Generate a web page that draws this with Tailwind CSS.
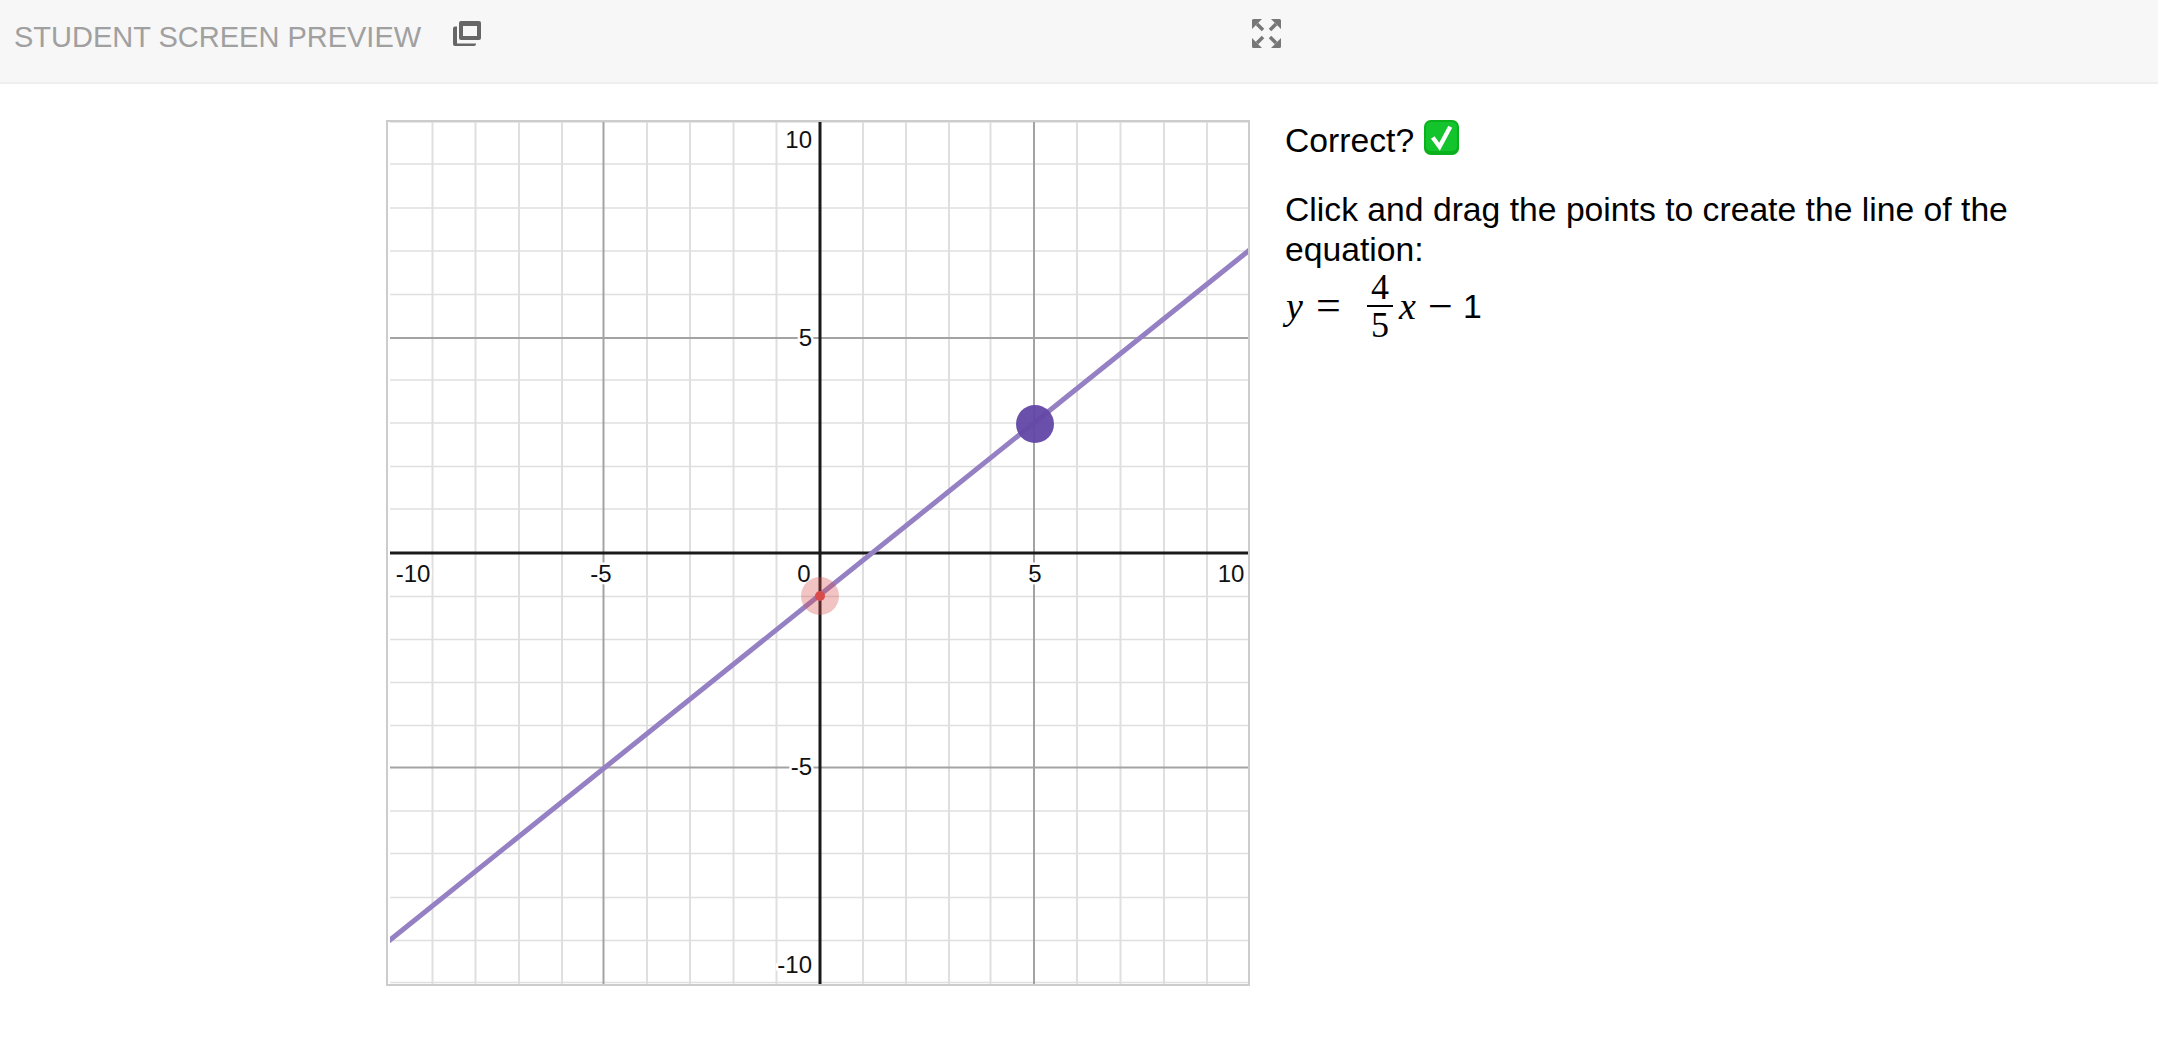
<!DOCTYPE html>
<html lang="en">
<head>
  <meta charset="UTF-8" />
  <title>Student Screen Preview</title>
  <script src="https://cdn.jsdelivr.net/npm/@tailwindcss/browser@4"></script>
</head>
<body class="bg-white font-['Liberation_Sans',Arial,sans-serif] h-[1050px] overflow-hidden">

  <header class="h-[84px] bg-[#f7f7f7] border-b-2 border-[#eeeeee] flex items-start">
    <span class="ml-[14px] mt-[19px] text-[29px] leading-[36px] text-[#a0a0a0]">STUDENT SCREEN PREVIEW</span>
    <svg class="ml-[31px] mt-[20px] w-[30px] h-[27px]" viewBox="0 0 30 27" fill="#666666">
      <path fill-rule="evenodd" d="M9 1h18a2 2 0 0 1 2 2v15a2 2 0 0 1-2 2H9a2 2 0 0 1-2-2V3a2 2 0 0 1 2-2zm2 5v10h14V6z"/>
      <path d="M1 8.500a2 2 0 0 1 2-2h2v17h19v0.500a2 2 0 0 1-2 2H3a2 2 0 0 1-2-2z"/>
    </svg>
    <svg class="ml-[770px] mt-[19px] w-[29px] h-[29px]" viewBox="0 0 29 29" fill="#777777" stroke="#777777">
      <g>
        <path stroke="none" d="M1.500 0H10L0 10V1.500A1.500 1.500 0 0 1 1.500 0z"/>
        <line x1="5" y1="5" x2="11" y2="11" stroke-width="3.500"/>
      </g>
      <g transform="rotate(90 14.500 14.500)">
        <path stroke="none" d="M1.500 0H10L0 10V1.500A1.500 1.500 0 0 1 1.500 0z"/>
        <line x1="5" y1="5" x2="11" y2="11" stroke-width="3.500"/>
      </g>
      <g transform="rotate(180 14.500 14.500)">
        <path stroke="none" d="M1.500 0H10L0 10V1.500A1.500 1.500 0 0 1 1.500 0z"/>
        <line x1="5" y1="5" x2="11" y2="11" stroke-width="3.500"/>
      </g>
      <g transform="rotate(270 14.500 14.500)">
        <path stroke="none" d="M1.500 0H10L0 10V1.500A1.500 1.500 0 0 1 1.500 0z"/>
        <line x1="5" y1="5" x2="11" y2="11" stroke-width="3.500"/>
      </g>
    </svg>
  </header>

  <main class="flex items-start pt-[36px] pl-[386px]">
    <div class="w-[864px] h-[866px] border-2 border-[#cccccc] shrink-0">
      <svg id="graph" class="block w-[860px] h-[862px]" viewBox="388 122 860 862">
        <defs>
          <clipPath id="plotArea"><rect x="390" y="122" width="859" height="862" /></clipPath>
        </defs>
        <g id="gridLines"></g>
        <g font-family="'Liberation Sans', Arial, sans-serif" font-size="24" fill="#111111" stroke="#ffffff" stroke-width="5" paint-order="stroke">
          <text x="812" y="148" text-anchor="end">10</text>
          <text x="812" y="346" text-anchor="end">5</text>
          <text x="812" y="775" text-anchor="end">-5</text>
          <text x="812" y="973" text-anchor="end">-10</text>
          <text x="413" y="582" text-anchor="middle">-10</text>
          <text x="601" y="582" text-anchor="middle">-5</text>
          <text x="804" y="582" text-anchor="middle">0</text>
          <text x="1035" y="582" text-anchor="middle">5</text>
          <text x="1231" y="582" text-anchor="middle">10</text>
        </g>
        <line clip-path="url(#plotArea)" x1="380" y1="948" x2="1259" y2="242.400" stroke="#9580c4" stroke-width="5" />
        <circle cx="820" cy="596" r="19" fill="#d94a4a" fill-opacity="0.33" />
        <circle cx="820" cy="596" r="5" fill="#d94a4a" />
        <circle cx="1035" cy="424" r="19" fill="#6347a6" fill-opacity="0.95" />
      </svg>
    </div>

    <div class="ml-[35px] w-[760px] text-[33.7px] leading-[40px] text-black">
      <p class="flex items-start gap-[10px] h-[40px]">
        Correct?
        <svg class="w-[35px] h-[35px]" viewBox="0 0 36 36">
          <rect width="36" height="36" rx="7" fill="#0bb01d" />
          <rect x="2" y="2" width="32" height="30" rx="5" fill="#14c42c" />
          <path d="M9 18l7 9.500L27 7" fill="none" stroke="#ffffff" stroke-width="4.500" />
        </svg>
      </p>
      <p class="mt-[29px]">Click and drag the points to create the line of the equation:</p>
      <div class="flex items-center h-[74px] font-['Liberation_Serif',serif]">
        <span class="italic text-[38px] ml-[1px] w-[24px]">y</span>
        <span class="ml-[6px] text-[44px] w-[25px]">=</span>
        <span class="ml-[26px] flex flex-col items-center w-[26px] text-[36px] leading-[36px]">
          <span class="border-b-2 border-black w-full text-center">4</span>
          <span>5</span>
        </span>
        <span class="italic text-[38px] ml-[6px] w-[18px]">x</span>
        <span class="ml-[11px] text-[44px] w-[25px] pt-[2px]">&minus;</span>
        <span class="ml-[10px] font-['Liberation_Sans',sans-serif]">1</span>
      </div>
    </div>
  </main>

  <script>
    const gridLines = document.getElementById('gridLines');

    // measured from the picture, index 0 is the value -10 (spacing is not quite even)
    const xs = [389, 432.5, 475.5, 519, 562, 603.5, 647, 690, 733.5, 776.5, 820, 863, 906, 949, 990.5, 1034, 1077, 1120.5, 1164, 1207, 1249];
    const ys = [982.5, 940.5, 897.5, 853.5, 811, 767.5, 725.5, 682.5, 639.5, 596.5, 553, 509, 466.5, 423, 380, 338, 294.5, 251, 208, 164, 122];

    function addLine(x1, y1, x2, y2, color, width) {
      const line = document.createElementNS('http://www.w3.org/2000/svg', 'line');
      line.setAttribute('x1', x1);
      line.setAttribute('y1', y1);
      line.setAttribute('x2', x2);
      line.setAttribute('y2', y2);
      line.setAttribute('stroke', color);
      line.setAttribute('stroke-width', width);
      gridLines.appendChild(line);
    }

    // minor lines first so the major ones sit on top
    [false, true].forEach((major) => {
      for (let i = 0; i <= 20; i++) {
        const isMajor = i === 5 || i === 15;
        if (isMajor !== major || i === 10) continue;
        const color = major ? '#a3a3a3' : '#dfdfdf';
        if (i > 0 && i < 20) addLine(xs[i], 122, xs[i], 984, color, 2);
        addLine(390, ys[i], 1249, ys[i], color, major ? 2 : 1.600);
      }
    });

    addLine(820, 122, 820, 984, '#1a1a1a', 3);
    addLine(390, 553, 1249, 553, '#1a1a1a', 3);
  </script>
</body>
</html>
